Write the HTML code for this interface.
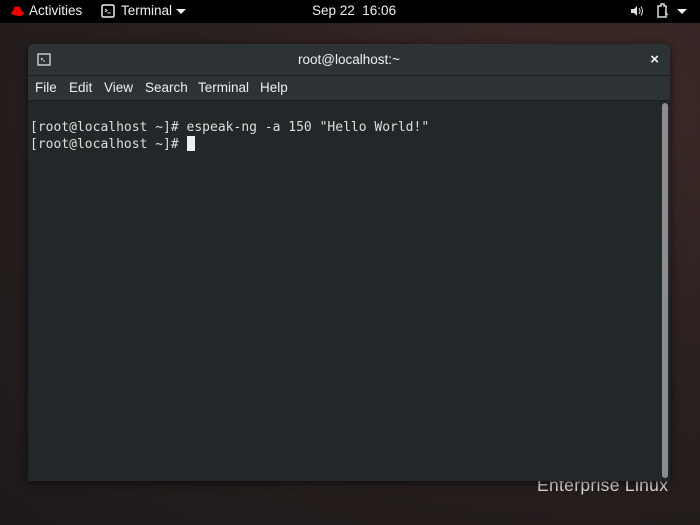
<!DOCTYPE html>
<html><head><style>
*{margin:0;padding:0;box-sizing:border-box}
body{width:700px;height:525px;overflow:hidden;position:relative;font-family:"Liberation Sans","DejaVu Sans",sans-serif;background:radial-gradient(ellipse at 85% 20%,#3d2a28 0%,#2a201f 45%,#1e1a1a 100%)}
#top{position:absolute;left:0;top:0;width:700px;height:23px;background:#000;color:#eee;font-size:13.5px}
#top span{position:absolute;top:3px}
.tri{position:absolute;width:0;height:0;border-left:5px solid transparent;border-right:5px solid transparent;border-top:5px solid #eee}
#win{position:absolute;left:28px;top:44px;width:642px;height:437px;background:#232729;border-radius:5px 5px 0 0;box-shadow:0 2px 10px rgba(0,0,0,.6);overflow:hidden}
#tb{height:32px;background:#2d3234;border-bottom:1px solid #1a1c1d;color:#eee;font-size:13.5px;text-align:center;line-height:32px;position:relative}
#mb{height:25px;background:#2d3234;border-bottom:1px solid #1a1c1d;color:#eee;font-size:13.5px;position:relative}
#mb span{position:absolute;top:4px}
#term{position:absolute;left:2px;top:75px;font-family:"DejaVu Sans Mono",monospace;font-size:13px;line-height:17px;color:#dcdfd8;white-space:pre}
#sb{position:absolute;left:634px;top:59px;width:6px;height:375px;background:#8a8d8e;border-radius:3px}
#ent{position:absolute;left:537px;top:475px;color:#ddd;font-size:17.5px;letter-spacing:.3px}
</style></head><body>
<div id="ent">Enterprise Linux</div>
<div id="top">
<svg style="position:absolute;left:10px;top:6px" width="15" height="11" viewBox="0 0 15 11"><path d="M3 5 L4.5 1 Q7 0 10 1 L11.5 5 Q14 6 14 7.5 Q14 10 8 10 Q1 9 1 6.5 Q1 5.5 3 5Z" fill="#e00"/></svg>
<span style="left:29px">Activities</span>
<svg style="position:absolute;left:101px;top:4px" width="14" height="14"><rect x="1" y="1" width="12" height="12" rx="1.5" fill="none" stroke="#eee" stroke-width="1.5"/><path d="M4 5l2 1.5-2 1.5M6.5 9h3" stroke="#eee" fill="none"/></svg>
<span style="left:121px">Terminal</span>
<div class="tri" style="left:176px;top:9px"></div>
<span style="left:312px">Sep 22&nbsp; 16:06</span>
<svg style="position:absolute;left:630px;top:5px" width="14" height="12"><path d="M1 4h3l3-3v10l-3-3H1z" fill="#ddd"/><path d="M9 3q2 3 0 6M11 1.5q3 4.5 0 9" stroke="#ddd" fill="none"/></svg>
<svg style="position:absolute;left:656px;top:3px" width="14" height="16"><path d="M2 3h3V1h3v2h2v11H2z" fill="none" stroke="#ddd" stroke-width="1.5"/><path d="M9 9l3 3" stroke="#ddd"/></svg>
<div class="tri" style="left:677px;top:9px"></div>
</div>
<div id="win">
<div id="tb">root@localhost:~
<svg style="position:absolute;left:9px;top:9px" width="14" height="14"><rect x="1" y="1" width="12" height="11" fill="none" stroke="#ddd" stroke-width="1.3"/><path d="M4 5l1.5 1L4 7M6 8h2" stroke="#ddd" fill="none"/></svg>
<span style="position:absolute;right:11px;top:0;font-size:15px;font-weight:bold">×</span>
</div>
<div id="mb"><span style="left:7px">File</span><span style="left:41px">Edit</span><span style="left:76px">View</span><span style="left:117px">Search</span><span style="left:170px">Terminal</span><span style="left:232px">Help</span></div>
<div id="term">[root@localhost ~]# espeak-ng -a 150 "Hello World!"
[root@localhost ~]# <span style="background:#eee;display:inline-block;width:8px;height:15px;vertical-align:-3px"></span></div>
<div id="sb"></div>
</div>
</body></html>
